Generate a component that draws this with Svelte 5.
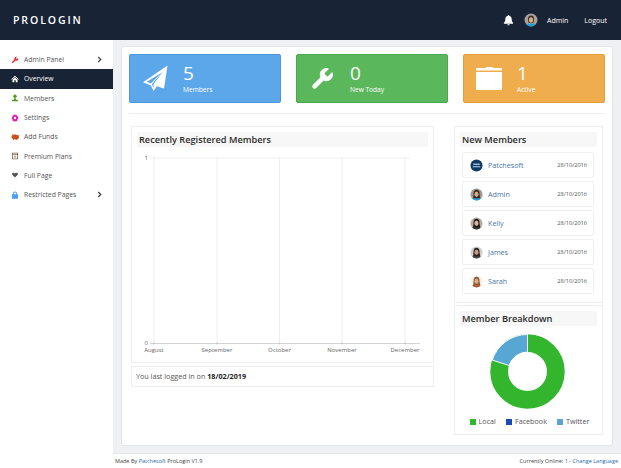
<script lang="ts">
	const nav = [
		{ label: 'Admin Panel', icon: 'wrench', color: '#ea1c24', more: true },
		{ label: 'Overview', icon: 'home', color: '#fff', active: true },
		{ label: 'Members', icon: 'user', color: '#4d9a1c' },
		{ label: 'Settings', icon: 'gear', color: '#e815b4' },
		{ label: 'Add Funds', icon: 'piggy', color: '#c2521a' },
		{ label: 'Premium Plans', icon: 'plans', color: '#8a6a55' },
		{ label: 'Full Page', icon: 'heart', color: '#555' },
		{ label: 'Restricted Pages', icon: 'lock', color: '#4a9fef', more: true }
	];

	const stats = [
		{ value: 5, label: 'Members', kind: 'blue' },
		{ value: 0, label: 'New Today', kind: 'green' },
		{ value: 1, label: 'Active', kind: 'orange' }
	];

	const members = [
		{ name: 'Patchesoft', bg: '#0f3a63', skin: '', hair: '' },
		{ name: 'Admin', bg: '#9a9a9a', skin: '#d9a98a', hair: '#3a2a20', shirt: '#1e9fd6' },
		{ name: 'Kelly', bg: '#b5aca6', skin: '#dcb49c', hair: '#241a16', shirt: '#333' },
		{ name: 'James', bg: '#cfcfcf', skin: '#c99a80', hair: '#2c2320', shirt: '#444' },
		{ name: 'Sarah', bg: '#f3efe9', skin: '#dba888', hair: '#8a5a30', shirt: '#a8623a' }
	];

	const months = [
		{ x: 154, label: 'August' },
		{ x: 217, label: 'September' },
		{ x: 279.5, label: 'October' },
		{ x: 342, label: 'November' },
		{ x: 405, label: 'December' }
	];

	const legend = [
		{ label: 'Local', color: '#33b62e' },
		{ label: 'Facebook', color: '#1c4bb0' },
		{ label: 'Twitter', color: '#57a6d4' }
	];
</script>

{#snippet avatar(m)}
	<svg class="avatar" viewBox="0 0 14 14">
		<defs>
			<clipPath id="av-{m.name}"><circle cx="7" cy="7" r="6.5" /></clipPath>
		</defs>
		<g clip-path="url(#av-{m.name})">
			<rect width="14" height="14" fill={m.bg} />
			{#if m.skin}
				<path d="M2 14c0-3 2-4.500 5-4.500s5 1.500 5 4.500z" fill={m.shirt} />
				<path d="M3.800 6.500C3.800 3.500 5 2 7 2s3.500 1.500 3.300 4.500c0 2 .7 3 .7 4.500H3.500c0-1.500.3-2.500.3-4.500z" fill={m.hair} />
				<ellipse cx="7" cy="6.800" rx="2.200" ry="2.900" fill={m.skin} />
			{:else}
				<rect x="3.500" y="5" width="7" height="1.200" fill="#cfe0ee" />
				<rect x="3" y="7.500" width="8" height="1.500" fill="#8fb0cc" />
			{/if}
		</g>
	</svg>
{/snippet}

{#snippet navIcon(name, color)}
	<svg class="nav-icon" viewBox="0 0 12 12" fill={color}>
		{#if name === 'wrench'}
			<path transform="scale(.5)" d="M14.700 6.300a1 1 0 0 0 0 1.400l1.600 1.600a1 1 0 0 0 1.400 0l3.770-3.770a6 6 0 0 1-7.940 7.940l-6.910 6.910a2.120 2.120 0 0 1-3-3l6.910-6.910a6 6 0 0 1 7.940-7.940l-3.760 3.760z" />
		{:else if name === 'home'}
			<path d="M6 1.300.4 6.300l.8.8L6 3l4.800 4.100.8-.8zM2.200 7.300V11h2.700V8h2.200v3h2.700V7.300L6 4z" />
		{:else if name === 'user'}
			<circle cx="6" cy="3.400" r="2.500" /><path d="M4.600 6.200h2.800v2l3.200 1V11H1.400V9.200l3.200-1z" />
		{:else if name === 'gear'}
			<path fill-rule="evenodd" d="M5 .8h2l.3 1.400 1.300-.7 1.400 1.400-.7 1.300 1.400.3v3l-1.400.3.700 1.300L8.600 10.700l-1.300-.7-.3 1.200H5l-.3-1.200-1.300.7L2 9.300l.7-1.300L1.300 7.700v-3l1.400-.3L2 3l1.400-1.500 1.300.7zM6 4.200a1.800 1.800 0 1 0 0 3.600 1.800 1.800 0 0 0 0-3.600z" />
		{:else if name === 'piggy'}
			<path d="M1.500 2 3.800 2.800C5.500 2.200 8 2.200 9.500 3.200l2.300-.7-.6 2.300.8.700v2.200l-1.500.6-1 2H7.200l-.3-.8H5l-.3.8H3.100l-.7-1.800L1 7 .2 5.300l1.800-.6z" />
		{:else if name === 'plans'}
			<path fill-rule="evenodd" d="M1.500 1h9v10h-9zM2.800 2.200v1.200h6.400V2.200zm0 2.300v5.300h6.400V4.500zM6 5.300a1.100 1.100 0 1 1 0 2.200 1.100 1.100 0 0 1 0-2.200zM4 8.800c.3-1 3.700-1 4 0z" />
		{:else if name === 'heart'}
			<path transform="translate(1.200 1.200) scale(.8)" d="M6 10.500.9 5.400C-.2 3.600 1 1.800 3 1.800c1.400 0 2.500.9 3 1.800.5-.9 1.600-1.800 3-1.800 2 0 3.200 1.800 2.100 3.600z" />
		{:else if name === 'lock'}
			<path fill-rule="evenodd" d="M3 5V3.700a3 3 0 0 1 6 0V5h1.500v6.500h-9V5zm1.400 0h3.200V3.700a1.600 1.600 0 0 0-3.200 0z" />
		{/if}
	</svg>
{/snippet}

<div class="page">
	<header class="topbar">
		<div class="logo">PROLOGIN</div>
		<div class="top-right">
			<svg class="bell" viewBox="0 0 12 12" fill="#fff">
				<path d="M6 .5c.5 0 .8.300.8.800C8.500 1.700 9.500 3 9.500 5c0 2.500.8 3.500 1.500 4.300v.7H1v-.7C1.700 8.500 2.500 7.500 2.500 5c0-2 1-3.300 2.700-3.700 0-.5.300-.8.800-.8zM4.700 10.500h2.600a1.300 1.300 0 0 1-2.600 0z" />
			</svg>
			<svg class="top-avatar" viewBox="0 0 14 14">
				<defs><clipPath id="top-av"><circle cx="7" cy="7" r="6.500" /></clipPath></defs>
				<g clip-path="url(#top-av)">
					<rect width="14" height="14" fill="#a5a09c" />
					<path d="M2 14c0-3 2-3.500 5-3.500s5 .5 5 3.500z" fill="#1e9fd6" />
					<path d="M4 6.500C4 3.500 5 2.500 7 2.500s3 1 3 4c0 2-.5 3-1 3.500H5c-.5-.5-1-1.500-1-3.500z" fill="#3a2a20" />
					<ellipse cx="7" cy="7" rx="2.100" ry="2.800" fill="#d9a98a" />
				</g>
			</svg>
			<span class="top-link admin">Admin</span>
			<span class="top-link">Logout</span>
		</div>
	</header>

	<div class="body">
		<nav class="sidebar">
			{#each nav as item}
				<div class="nav-item" class:active={item.active}>
					{@render navIcon(item.icon, item.color)}
					<span class="nav-label">{item.label}</span>
					{#if item.more}
						<svg class="chevron" viewBox="0 0 6 8" fill="none" stroke="#444" stroke-width="1.500">
							<path d="M1.500 1 4.500 4 1.500 7" />
						</svg>
					{/if}
				</div>
			{/each}
		</nav>

		<div class="content">
			<main class="panel">
				<section class="stats">
					{#each stats as s}
						<div class="stat {s.kind}">
							<div class="stat-icon">
								{#if s.kind === 'blue'}
									<svg viewBox="0 0 26 27" fill="#fff">
										<path fill-rule="evenodd" d="M25.500.5 1 17.200l7.800 3.200 2.900 5.600 3-4.700 7.300 2.300zM21.500 6 9.800 19.200l1.900 3.800-.2-3.800zM20 7.500 4.800 16.800l4 1.600z" />
									</svg>
								{:else if s.kind === 'green'}
									<svg viewBox="0 0 24 24" fill="#fff">
										<path d="M14.700 6.300a1 1 0 0 0 0 1.400l1.600 1.600a1 1 0 0 0 1.400 0l3.770-3.770a6 6 0 0 1-7.940 7.940l-6.910 6.910a2.120 2.120 0 0 1-3-3l6.910-6.910a6 6 0 0 1 7.940-7.940l-3.760 3.760z" />
									</svg>
								{:else}
									<svg viewBox="0 0 26 23" fill="#fff">
										<path d="M0 1h9.500l1-1h6l1 1H26v2.500H0zM0 5h26v18H0z" />
									</svg>
								{/if}
							</div>
							<div class="stat-text">
								<div class="stat-value">{s.value}</div>
								<div class="stat-label">{s.label}</div>
							</div>
						</div>
					{/each}
				</section>

				<hr class="rule" />

				<div class="columns">
					<div class="col-left">
						<section class="box chart-box">
							<h3 class="box-title">Recently Registered Members</h3>
							<svg class="chart" viewBox="131 150 303 213">
								<g stroke="#eeeeee" stroke-width="1">
									{#each months.slice(1) as m}
										<line x1={m.x} x2={m.x} y1="158" y2="343" />
									{/each}
									<line x1="150" x2="410" y1="158" y2="158" />
									<line x1="154" x2="154" y1="156" y2="343" />
								</g>
								<line x1="150" x2="420" y1="343.500" y2="343.500" stroke="#d4d4d4" />
								<text class="tick" x="148" y="160" text-anchor="end">1</text>
								<text class="tick" x="148" y="345" text-anchor="end">0</text>
								{#each months as m}
									<circle cx={m.x} cy="343.500" r="1" fill="#c8c8c8" />
									<text class="tick" x={m.x} y="352" text-anchor="middle">{m.label}</text>
								{/each}
							</svg>
						</section>
						<div class="box last-login">
							You last logged in on <b>18/02/2019</b>
						</div>
					</div>

					<div class="col-right">
						<section class="box members-box">
							<h3 class="box-title">New Members</h3>
							<ul class="member-list">
								{#each members as m}
									<li class="member">
										{@render avatar(m)}
										<span class="member-name">{m.name}</span>
										<span class="member-date">28/10/2016</span>
									</li>
								{/each}
							</ul>
						</section>
						<section class="box breakdown-box">
							<h3 class="box-title">Member Breakdown</h3>
							<svg class="donut" viewBox="0 0 76 76">
								<circle cx="38" cy="38" r="28.750" fill="none" stroke="#33b62e" stroke-width="18" />
								<path d="M38 .5A37.500 37.500 0 0 0 2.300 26.400L19.300 31.900A19.700 19.700 0 0 1 38 18.300z" fill="#57a6d4" stroke="#fff" stroke-width="1" />
							</svg>
							<div class="legend">
								{#each legend as l}
									<span class="legend-item">
										<i class="swatch" style:background={l.color}></i>{l.label}
									</span>
								{/each}
							</div>
						</section>
					</div>
				</div>
			</main>
			<footer class="footer">
				<span>Made By <a href="#top">Patchesoft</a> ProLogin V1.9</span>
				<span>Currently Online: <a href="#top">1</a> - <a href="#top">Change Language</a></span>
			</footer>
		</div>
	</div>
</div>

<style>
	:global(body) {
		margin: 0;
	}

	.page {
		width: 621px;
		height: 468px;
		overflow: hidden;
		display: flex;
		flex-direction: column;
		font-family: 'Open Sans', sans-serif;
		color: #555;
		background: #eef0f3;
	}

	.topbar {
		height: 40px;
		flex: none;
		display: flex;
		align-items: center;
		justify-content: space-between;
		padding: 0 14px 0 13px;
		background: #192336;
		color: #fff;
	}

	.logo {
		font-size: 10.5px;
		font-weight: 600;
		letter-spacing: 1.9px;
	}

	.top-right {
		display: flex;
		align-items: center;
	}

	.bell {
		width: 11px;
		height: 12px;
	}

	.top-avatar {
		width: 14px;
		height: 14px;
		margin-left: 10px;
	}

	.top-link {
		font-size: 7px;
	}

	.admin {
		margin: 0 16px 0 9px;
	}

	.body {
		flex: 1;
		display: flex;
		min-height: 0;
	}

	.sidebar {
		width: 113px;
		flex: none;
		padding-top: 10px;
		background: #fff;
	}

	.nav-item {
		height: 19.3px;
		display: flex;
		align-items: center;
		padding: 0 11px;
		font-size: 6.8px;
		color: #555;
		box-sizing: border-box;
	}

	.nav-item.active {
		background: #192336;
		color: #fff;
	}

	.nav-icon {
		width: 8px;
		height: 8px;
		flex: none;
		margin-right: 5px;
	}

	.nav-label {
		flex: 1;
	}

	.chevron {
		width: 5px;
		height: 7px;
	}

	.content {
		flex: 1;
		display: flex;
		flex-direction: column;
		min-width: 0;
	}

	.panel {
		flex: none;
		height: 400px;
		box-sizing: border-box;
		margin: 6px 8px 7px 8px;
		padding: 7px 7px 0 7px;
		background: #fff;
		border: 1px solid #e3e5e8;
		border-radius: 3px;
	}

	.stats {
		display: grid;
		grid-template-columns: 152px 152px 142px;
		gap: 15px;
	}

	.stat {
		height: 49px;
		box-sizing: border-box;
		display: flex;
		align-items: center;
		border: 1px solid;
		border-radius: 2px;
		color: #fff;
	}

	.blue {
		background: #5ca7e9;
		border-color: #4f97d8;
	}

	.green {
		background: #5bb75b;
		border-color: #4ea64e;
	}

	.orange {
		background: #f0ad4e;
		border-color: #e29d3c;
	}

	.stat-icon {
		width: 26px;
		height: 26px;
		margin-left: 12px;
		display: flex;
		align-items: center;
	}

	.stat-icon svg {
		width: 26px;
		display: block;
	}

	.stat-text {
		margin-left: 15px;
	}

	.stat-value {
		font-size: 19px;
		line-height: 19px;
	}

	.stat-label {
		margin-top: 2px;
		font-size: 6.6px;
		line-height: 9px;
	}

	.rule {
		margin: 10px 0 12px;
		border: 0;
		border-top: 1px solid #eeeeee;
	}

	.columns {
		display: flex;
		padding: 0 2px;
	}

	.col-left {
		width: 303px;
		margin-right: 20px;
	}

	.col-right {
		width: 149px;
	}

	.box {
		box-sizing: border-box;
		border: 1px solid #eeeeee;
		background: #fff;
	}

	.box-title {
		height: 15px;
		margin: 5px 5px 0;
		padding: 0 2px;
		background: #f7f7f7;
		font-size: 9.2px;
		font-weight: 600;
		line-height: 15px;
		color: #2b2b2b;
	}

	.chart-box {
		height: 237px;
	}

	.chart {
		display: block;
		width: 303px;
		height: 213px;
		margin: 3px 0 0 -1px;
	}

	.tick {
		font-family: 'Open Sans', sans-serif;
		font-size: 6px;
		fill: #666;
	}

	.last-login {
		height: 21px;
		margin-top: 3px;
		padding-left: 4px;
		font-size: 7.2px;
		line-height: 19px;
		color: #555;
	}

	.last-login b {
		color: #222;
	}

	.members-box {
		height: 177px;
	}

	.member-list {
		list-style: none;
		margin: 5px 0 0;
		padding: 0 8px 0 7px;
		display: flex;
		flex-direction: column;
		gap: 3px;
	}

	.member {
		height: 26px;
		box-sizing: border-box;
		display: flex;
		align-items: center;
		padding: 0 6px 0 7px;
		border: 1px solid #f0f0f0;
		border-radius: 2px;
	}

	.avatar {
		width: 13px;
		height: 13px;
		flex: none;
		margin-right: 5px;
	}

	.member-name {
		flex: 1;
		font-size: 7.2px;
		color: #4a76a8;
	}

	.member-date {
		font-size: 5.6px;
		color: #555;
	}

	.breakdown-box {
		height: 130px;
		margin-top: 2px;
	}

	.donut {
		display: block;
		width: 75px;
		height: 75px;
		margin: 8px auto 0 35px;
	}

	.legend {
		display: flex;
		justify-content: center;
		gap: 10px;
		margin-top: 8px;
		padding-left: 2px;
		font-size: 7.2px;
		line-height: 9px;
		color: #555;
	}

	.legend-item {
		display: flex;
		align-items: center;
	}

	.swatch {
		width: 6px;
		height: 6px;
		margin-right: 3px;
	}

	.footer {
		flex: 1;
		display: flex;
		align-items: center;
		justify-content: space-between;
		padding: 0 3px 0 2px;
		background: #fff;
		border-top: 1px solid #e3e5e8;
		font-size: 5.5px;
		color: #444;
	}

	.footer a {
		color: #2a6db0;
		text-decoration: none;
	}
</style>
